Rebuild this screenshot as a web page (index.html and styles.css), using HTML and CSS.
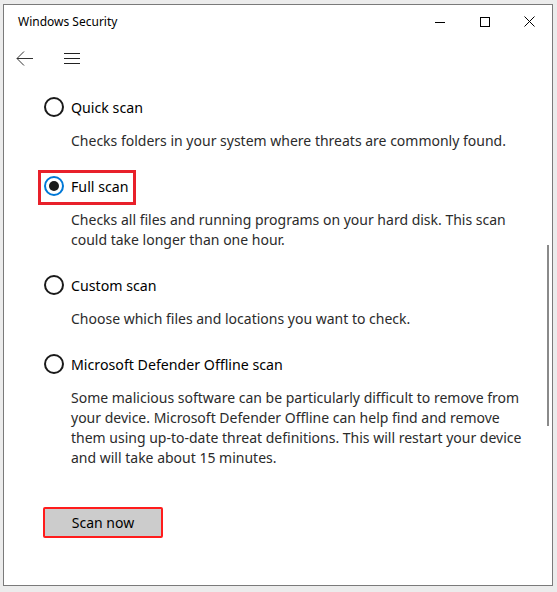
FILE: index.html
```html
<!DOCTYPE html>
<html>
<head>
<meta charset="utf-8">
<link rel="stylesheet" href="styles.css">
</head>
<body>
<div class="window">
  <div class="titlebar">
    <span class="title">Windows Security</span>
    <div class="controls">
      <span class="ctl"><svg width="10" height="10" viewBox="0 0 10 10"><path d="M0 5.5H10" stroke="#000" stroke-width="1"/></svg></span>
      <span class="ctl"><svg width="10" height="10" viewBox="0 0 10 10"><rect x="0.5" y="0.5" width="9" height="9" fill="none" stroke="#000" stroke-width="1"/></svg></span>
      <span class="ctl"><svg width="11" height="11" viewBox="0 0 11 11"><path d="M0.5 0.5L10.5 10.5M10.5 0.5L0.5 10.5" stroke="#000" stroke-width="1"/></svg></span>
    </div>
  </div>
  <div class="navbar">
    <svg class="nav-icon" width="17" height="15" viewBox="0 0 17 15"><path d="M1 7.5H17M8 0.5L1 7.5L8 14.5" fill="none" stroke="#333" stroke-width="1"/></svg>
    <svg class="nav-icon" width="16" height="11" viewBox="0 0 16 11"><path d="M0 0.5H16M0 5.5H16M0 10.5H16" stroke="#222" stroke-width="1"/></svg>
  </div>
  <div class="content">
    <div class="options">
      <div class="option">
        <div class="radio-row"><span class="radio"></span><span class="label">Quick scan</span></div>
        <p class="desc">Checks folders in your system where threats are commonly found.</p>
      </div>
      <div class="option">
        <div class="radio-row highlighted"><span class="radio checked"></span><span class="label">Full scan</span><span class="mark"></span></div>
        <p class="desc">Checks all files and running programs on your hard disk. This scan could take longer than one hour.</p>
      </div>
      <div class="option">
        <div class="radio-row"><span class="radio"></span><span class="label">Custom scan</span></div>
        <p class="desc">Choose which files and locations you want to check.</p>
      </div>
      <div class="option">
        <div class="radio-row"><span class="radio"></span><span class="label">Microsoft Defender Offline scan</span></div>
        <p class="desc">Some malicious software can be particularly difficult to remove from your device. Microsoft Defender Offline can help find and remove them using up-to-date threat definitions. This will restart your device and will take about 15 minutes.</p>
      </div>
    </div>
    <button class="scan-btn">Scan now</button>
    <div class="scrollbar"></div>
  </div>
</div>
</body>
</html>
```

FILE: styles.css
```css
html, body {
  margin: 0;
  padding: 0;
}
body {
  background: #ececec;
  width: 557px;
  height: 592px;
  padding: 4px 0 0 3px;
  box-sizing: border-box;
  font-family: "Noto Sans", "Open Sans", sans-serif;
}
.window {
  width: 550px;
  height: 582px;
  box-sizing: border-box;
  border: 1px solid #7a7a7a;
  background: #fff;
  display: flex;
  flex-direction: column;
  position: relative;
}
.titlebar {
  height: 33px;
  display: flex;
  align-items: center;
  justify-content: space-between;
  padding-left: 14px;
}
.title {
  font-size: 12px;
  color: #000;
}
.controls {
  display: flex;
  height: 100%;
}
.ctl {
  width: 45px;
  display: flex;
  align-items: center;
  justify-content: center;
}
.navbar {
  height: 41px;
  display: flex;
  align-items: center;
  padding-left: 12px;
  gap: 31px;
}
.content {
  position: relative;
  flex: 1;
  padding: 13px 0 0 40px;
}
.option {
  margin-bottom: 20px;
}
.radio-row {
  display: inline-flex;
  align-items: center;
  height: 30px;
  gap: 7px;
  position: relative;
}
.radio {
  width: 20px;
  height: 20px;
  box-sizing: border-box;
  border: 2px solid #1a1a1a;
  border-radius: 50%;
  display: flex;
  align-items: center;
  justify-content: center;
}
.radio.checked {
  border-color: #0078d7;
}
.radio.checked::after {
  content: "";
  width: 10px;
  height: 10px;
  border-radius: 50%;
  background: #1a1a1a;
}
.label {
  font-size: 14.2px;
  color: #000;
}
.mark {
  position: absolute;
  left: -6px;
  top: -1px;
  width: 98px;
  height: 35px;
  box-sizing: border-box;
  border: 3px solid #e8202a;
}
.desc {
  margin: 9px 0 0 27px;
  font-size: 14px;
  line-height: 20px;
  color: #2b2b2b;
  width: 460px;
}
.scan-btn {
  margin-top: 19px;
  margin-left: -1px;
  width: 120px;
  height: 31px;
  box-sizing: border-box;
  border: 2px solid #ff1c1c;
  border-radius: 2px;
  background: #cccccc;
  font-family: "Noto Sans", "Open Sans", sans-serif;
  font-size: 14px;
  color: #000;
  padding: 0;
}
.scrollbar {
  position: absolute;
  right: 3px;
  top: 166px;
  width: 2px;
  height: 181px;
  background: #8a8a8a;
}
```
